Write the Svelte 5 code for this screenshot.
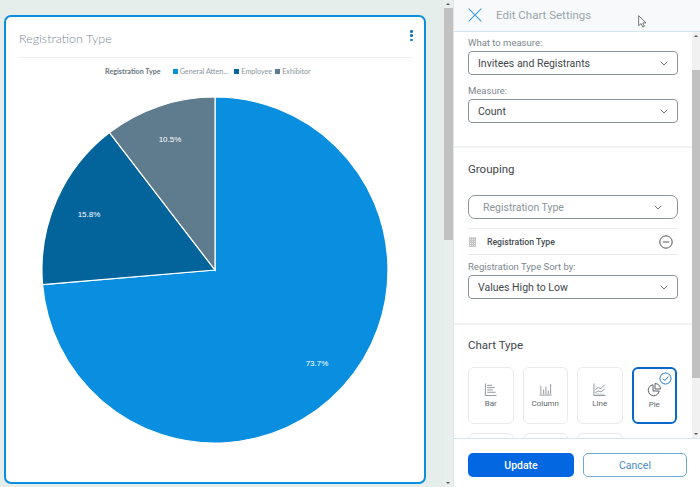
<script>
  const slices = [
    { d: "M215 270 L215 97 A173 173 0 1 1 42.6 284.6 Z", color: "#0a8fe0" },
    { d: "M215 270 L42.6 284.6 A173 173 0 0 1 109.5 132.6 Z", color: "#03649c" },
    { d: "M215 270 L109.5 132.6 A173 173 0 0 1 215 97 Z", color: "#5f7b8e" }
  ];
  const labels = [
    { x: 317, y: 366, text: "73.7%" },
    { x: 89, y: 217, text: "15.8%" },
    { x: 170, y: 142, text: "10.5%" }
  ];
  const legend = [
    { name: "General Atten...", color: "#0a8fe0" },
    { name: "Employee", color: "#03649c" },
    { name: "Exhibitor", color: "#5f7b8e" }
  ];
</script>

<div class="page">
  <div class="main">
    <div class="card">
      <div class="card-head">
        <h2>Registration Type</h2>
        <div class="kebab"><i></i><i></i><i></i></div>
      </div>
      <div class="legend">
        <b>Registration Type</b>
        {#each legend as item}
          <span class="key"><i style="background:{item.color}"></i>{item.name}</span>
        {/each}
      </div>
    </div>
    <svg class="pie" width="444" height="487" viewBox="0 0 444 487">
      {#each slices as s}
        <path d={s.d} fill={s.color} stroke="#fff" stroke-width="1.2" />
      {/each}
      {#each labels as l}
        <text x={l.x} y={l.y} text-anchor="middle">{l.text}</text>
      {/each}
    </svg>
  </div>

  <div class="scrollbar outer">
    <span class="arrow up"></span>
    <div class="thumb"></div>
    <span class="arrow down"></span>
  </div>

  <div class="panel">
    <header>
      <svg width="14" height="14" viewBox="0 0 14 14"><path d="M.7.7 13.3 13.3M13.3.7.7 13.3" stroke="#3d9be0" stroke-width="1.1" fill="none" /></svg>
      <span>Edit Chart Settings</span>
    </header>

    <div class="body">
      <div class="scroll">
        <section class="first">
          <label for="m1">What to measure:</label>
          <div class="select" id="m1">Invitees and Registrants<svg class="chev" width="8" height="5" viewBox="0 0 8 5"><path d="M.8.8 4 4 7.2.8" /></svg></div>
          <label for="m2" class="second">Measure:</label>
          <div class="select" id="m2">Count<svg class="chev" width="8" height="5" viewBox="0 0 8 5"><path d="M.8.8 4 4 7.2.8" /></svg></div>
        </section>

        <section class="grouping">
          <h3>Grouping</h3>
          <div class="select round">Registration Type<svg class="chev" width="8" height="5" viewBox="0 0 8 5"><path d="M.8.8 4 4 7.2.8" /></svg></div>
          <div class="group-row">
            <span class="grip"></span>
            <span class="name">Registration Type</span>
            <svg width="14" height="14" viewBox="0 0 14 14"><circle cx="7" cy="7" r="6.2" /><path d="M3.8 7h6.4" /></svg>
          </div>
          <label for="m3">Registration Type Sort by:</label>
          <div class="select" id="m3">Values High to Low<svg class="chev" width="8" height="5" viewBox="0 0 8 5"><path d="M.8.8 4 4 7.2.8" /></svg></div>
        </section>

        <section class="types">
          <h3>Chart Type</h3>
          <div class="tiles">
            <div class="tile">
              <svg width="13" height="13" viewBox="0 0 14 14"><path d="M1.5.5v13h12M3.5 2.5h5M3.5 5h8M3.5 7.5h6M3.5 10h9" /></svg>
              <span>Bar</span>
            </div>
            <div class="tile">
              <svg width="13" height="13" viewBox="0 0 14 14"><path d="M.5 13h13M2 12V3M5 12V7M7.5 12V4M10 12V8M12.5 12V1" /></svg>
              <span>Column</span>
            </div>
            <div class="tile">
              <svg width="13" height="13" viewBox="0 0 14 14"><path d="M1 .5v13h12.5M2.5 7l3-2 3 1 4-4M2.5 10.5l3-2 3 1 4-3" /><path d="M2.5 4h2M2.5 12h10" opacity=".5" /></svg>
              <span>Line</span>
            </div>
            <div class="tile active">
              <svg class="tick" width="13" height="13" viewBox="0 0 14 14"><circle cx="7" cy="7" r="6" /><path d="M4.2 7.2 6.2 9.2 10 5" /></svg>
              <svg class="pie-icon" width="14" height="14" viewBox="0 0 14 14"><path d="M6 1.8a5.5 5.5 0 1 0 6.2 6.2H6Z" /><path d="M8 .5v5.5h5.5A5.5 5.5 0 0 0 8 .5Z" /></svg>
              <span>Pie</span>
            </div>
            <div class="tile"></div>
            <div class="tile"></div>
            <div class="tile"></div>
          </div>
        </section>
      </div>
      <div class="scrollbar inner">
        <span class="arrow up"></span>
        <div class="thumb"></div>
        <span class="arrow down"></span>
      </div>
    </div>

    <footer>
      <button class="update">Update</button>
      <button class="cancel">Cancel</button>
    </footer>
  </div>

  <svg class="cursor" width="9" height="13" viewBox="0 0 9 13"><path d="M.7.7v10l2.4-2.2 1.6 3.6 1.7-.8-1.6-3.4h3.2Z" /></svg>
</div>

<style>
  :global(body) {
    background: #e6eeec;
  }

  .page {
    position: relative;
    display: flex;
    height: 487px;
    width: 700px;
    overflow: hidden;
    font-family: Roboto, "Noto Sans", sans-serif;
  }

  .main {
    position: relative;
    width: 444px;
    flex: none;
    padding: 15px 18px 3px 4px;
    box-sizing: border-box;
  }

  .card {
    height: 100%;
    box-sizing: border-box;
    background: #fff;
    border: 2px solid #0a8fe0;
    border-radius: 7px;
    padding: 0 12px;
  }

  .card-head {
    display: flex;
    justify-content: space-between;
    height: 41px;
    border-bottom: 1px solid #efefef;
    padding-top: 13px;
    box-sizing: border-box;
  }

  h2 {
    margin: 0;
    font: 300 12.5px Lato, sans-serif;
    color: #7d8a91;
    padding: 1px 0 0 1px;
  }

  .kebab {
    display: flex;
    flex-direction: column;
    gap: 1.8px;
    margin-right: -1px;
  }

  .kebab i {
    width: 2.6px;
    height: 2.6px;
    border-radius: 50%;
    background: #0a78c2;
  }

  .legend {
    display: flex;
    align-items: center;
    padding: 9px 0 0 87px;
    font: 400 7.2px Lato, sans-serif;
    color: #8b969d;
  }

  .legend b {
    color: #6a767e;
    margin-right: 12px;
  }

  .key {
    margin-right: 3px;
    white-space: nowrap;
  }

  .key:first-of-type {
    margin-right: 6px;
  }

  .key i {
    display: inline-block;
    width: 5px;
    height: 5px;
    margin-right: 2px;
  }

  .pie {
    position: absolute;
    left: 0;
    top: 0;
  }

  .pie text {
    font: 400 8px "Liberation Sans", sans-serif;
    fill: #fff;
  }

  .scrollbar {
    position: relative;
    flex: none;
    background: #f1f1f1;
    box-sizing: border-box;
  }

  .outer {
    width: 9px;
    padding-top: 8px;
    background: #e8efed;
  }

  .outer .thumb {
    height: 232px;
    background: #c1c1c1;
  }

  .inner {
    width: 8px;
    padding-top: 38px;
  }

  .inner .thumb {
    height: 308px;
    background: #c1c1c1;
  }

  .arrow {
    position: absolute;
    left: 2px;
    width: 0;
    height: 0;
    border-left: 2px solid transparent;
    border-right: 2px solid transparent;
  }

  .arrow.up {
    top: 3px;
    border-bottom: 2px solid #555;
  }

  .arrow.down {
    bottom: 3px;
    border-top: 2px solid #555;
  }

  .panel {
    width: 247px;
    flex: none;
    display: flex;
    flex-direction: column;
    background: #fff;
    border-left: 1px solid #dfe6e8;
    box-sizing: border-box;
  }

  header {
    height: 32px;
    flex: none;
    display: flex;
    align-items: center;
    gap: 14px;
    padding: 0 0 1px 14px;
    box-sizing: border-box;
    background: #f7f9fa;
    border-bottom: 1px solid #d5e3ec;
    font-size: 11.5px;
    color: #9aa6ac;
  }

  .body {
    flex: 1;
    min-height: 0;
    display: flex;
  }

  .scroll {
    flex: 1;
    min-width: 0;
    overflow: hidden;
  }

  section {
    padding: 0 14px;
    border-bottom: 2px solid #f1f2f3;
  }

  .first {
    height: 116px;
    padding-top: 5px;
    box-sizing: border-box;
  }

  label {
    display: block;
    font-size: 9.5px;
    line-height: 12px;
    color: #7c868c;
    margin-bottom: 2px;
  }

  label.second {
    margin-top: 10px;
  }

  .select {
    height: 24px;
    display: flex;
    align-items: center;
    justify-content: space-between;
    padding: 0 9px;
    box-sizing: border-box;
    border: 1px solid #8d9499;
    border-radius: 4px;
    font-size: 10.5px;
    color: #3f474d;
  }

  .chev {
    fill: none;
    stroke: #666;
    stroke-width: 0.9;
  }

  .select.round {
    border-radius: 7px;
    padding: 0 15px 0 14px;
    color: #8a9499;
  }

  .grouping {
    height: 177px;
    box-sizing: border-box;
    padding-top: 14px;
  }

  h3 {
    margin: 0;
    font-weight: 400;
    font-size: 11.5px;
    line-height: 14px;
    color: #3f474d;
  }

  .grouping h3 {
    margin-bottom: 19px;
  }

  .group-row {
    height: 27px;
    margin: 9px 0 6px;
    display: flex;
    align-items: center;
    border-top: 1px solid #e8eaeb;
    border-bottom: 1px solid #e8eaeb;
    box-sizing: border-box;
  }

  .grip {
    width: 7px;
    height: 10px;
    margin: 0 11px 0 1px;
    background:
      repeating-linear-gradient(90deg, #c4c4c4 0 1px, transparent 1px 2px),
      repeating-linear-gradient(0deg, #c4c4c4 0 1px, #e6e6e6 1px 2px);
  }

  .name {
    flex: 1;
    font-size: 8.7px;
    font-weight: 500;
    color: #444c52;
  }

  .group-row svg {
    fill: none;
    stroke: #555;
    stroke-width: 1;
    margin-right: 5px;
  }

  .types {
    padding-top: 13px;
    border: none;
  }

  .types h3 {
    margin-bottom: 15px;
  }

  .tiles {
    display: grid;
    grid-template-columns: repeat(4, 45.5px);
    column-gap: 9px;
    row-gap: 9px;
  }

  .tile {
    position: relative;
    height: 57px;
    display: flex;
    flex-direction: column;
    align-items: center;
    justify-content: center;
    gap: 3px;
    box-sizing: border-box;
    border: 1px solid #e8eaeb;
    border-radius: 6px;
    font-size: 8px;
    color: #5f676d;
  }

  .tile svg {
    fill: none;
    stroke: #6f767b;
    stroke-width: 0.8;
  }

  .tile .pie-icon {
    stroke: #5a6167;
    stroke-width: 1;
  }

  .tile.active {
    border: 2px solid #0867c8;
  }

  .tile .tick {
    position: absolute;
    top: 3px;
    right: 3px;
    background: #fff;
    border-radius: 50%;
    stroke: #0867c8;
    stroke-width: 1;
  }

  footer {
    height: 49px;
    flex: none;
    display: flex;
    gap: 9px;
    padding: 14px 13px 0 14px;
    box-sizing: border-box;
    background: #fff;
    border-top: 1px solid #d9e2ee;
  }

  button {
    height: 24px;
    font-family: inherit;
    font-size: 10.5px;
    font-weight: 500;
    border-radius: 5px;
    padding: 0;
  }

  .update {
    width: 106px;
    background: #0467e2;
    border: none;
    color: #fff;
  }

  .cancel {
    width: 104px;
    background: #fff;
    border: 1px solid #6ea9d8;
    color: #4c8cc8;
    font-weight: 400;
  }

  .cursor {
    position: absolute;
    left: 638px;
    top: 15px;
    fill: #fff;
    stroke: #666;
    stroke-width: 0.9;
  }
</style>
